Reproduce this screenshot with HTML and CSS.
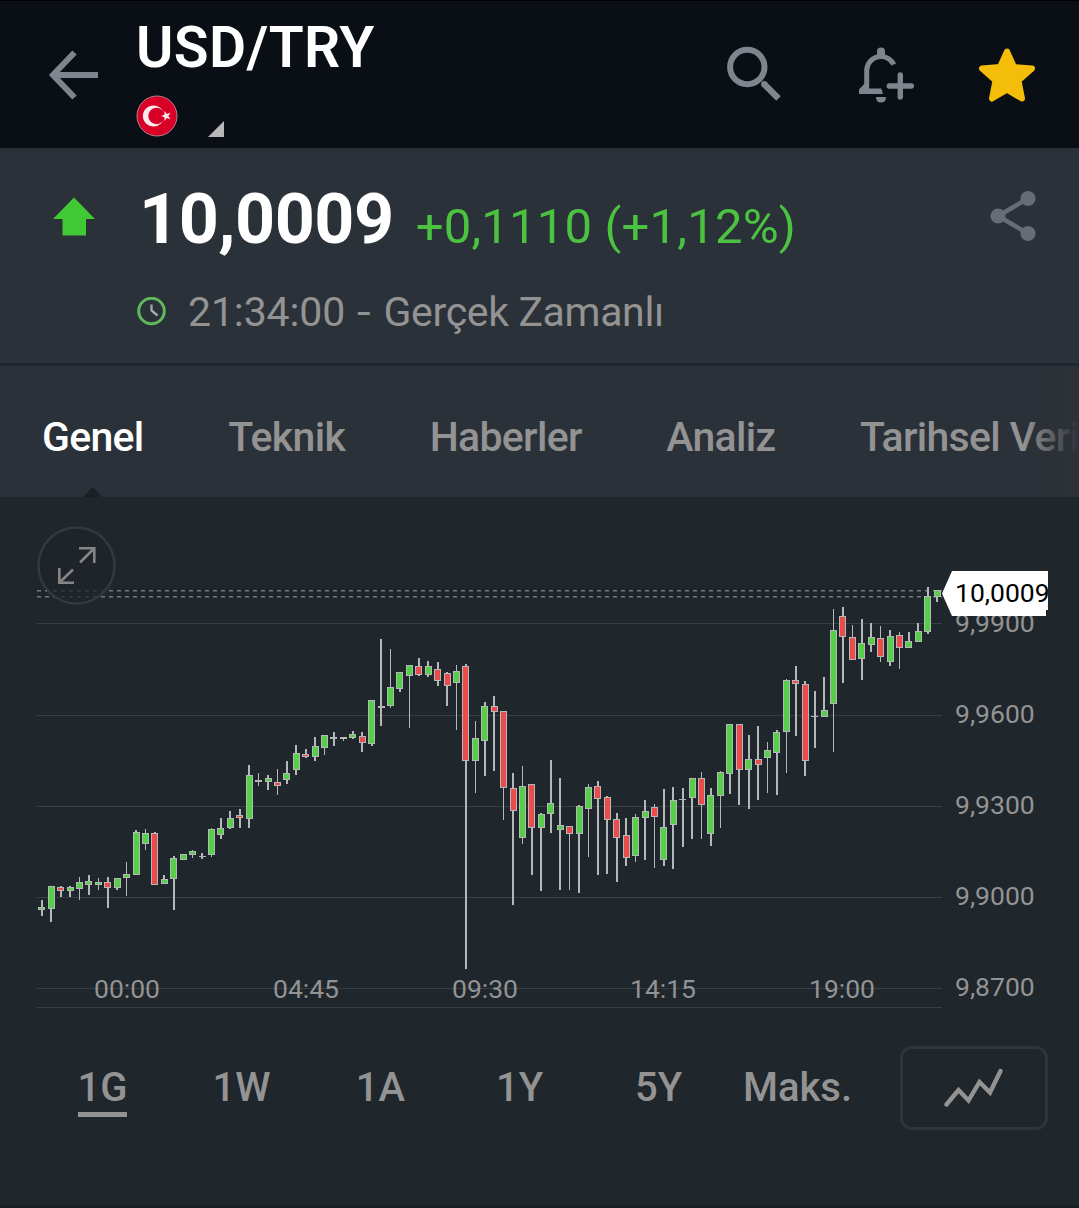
FILE: index.html
```html
<!DOCTYPE html>
<html lang="tr">

<head>
    <meta charset="UTF-8">
    <title>USD/TRY</title>
    <link rel="stylesheet" href="styles.css">
</head>

<body>

    <header class="top-bar">
        <svg class="back" width="50" height="50" viewBox="0 0 50 50">
            <path d="M26.500 2.500 L5 25 L26.500 47.500 M5 25 H50" />
        </svg>
        <div class="pair">
            <h1>USD/TRY</h1>
            <div class="pair-flag">
                <svg width="42" height="42" viewBox="0 0 42 42">
                    <circle cx="21" cy="21" r="20" fill="#d80027" stroke="#b77f8b" stroke-width="1" />
                    <circle cx="17.5" cy="21" r="10.6" fill="#fbe9ee" />
                    <circle cx="20.5" cy="21" r="8.2" fill="#d80027" />
                    <path d="M25 21 L28.5 19.8 L28.5 16 L30.8 19 L34.5 17.8 L32.3 21 L34.5 24.2 L30.8 23 L28.5 26 L28.5 22.2 Z" fill="#fbe9ee" />
                </svg>
                <span class="corner"></span>
            </div>
        </div>
        <div class="actions">
            <svg width="56" height="58" viewBox="0 0 56 58">
                <circle cx="20.300" cy="21" r="17.2" fill="none" stroke="#80858d" stroke-width="6" />
                <path d="M37 38 L51.500 52.500" stroke="#80858d" stroke-width="6.500" />
                <circle cx="37.300" cy="38.300" r="3.2" fill="#80858d" />
            </svg>
            <svg width="56" height="58" viewBox="0 0 56 58">
                <g fill="none" stroke="#80858d" stroke-width="5">
                    <path d="M7.7 41 V24 A14.3 14.3 0 0 1 34.8 18.5" />
                    <path d="M41.3 29 V51 M30.3 40 H52.3" stroke-width="5.4" stroke-linecap="round" />
                </g>
                <path d="M18 10 V5 Q18 1.5 22 1.5 Q26 1.5 26 5 V10 Z" fill="#80858d" />
                <path d="M5.2 38 L0 43.5 V48 H24 L22.3 42.500 H10 V38 Z" fill="#80858d" />
                <path d="M17 51 H27 Q27 56.5 22 56.5 Q17 56.5 17 51 Z" fill="#80858d" />
            </svg>
            <svg width="58" height="58" viewBox="0 0 58 58">
                <path d="M29 5.500 L36 21 L54 22.500 L40.500 34.500 L44 52.500 L29 43.700 L14 52.500 L17.500 34.500 L4 22.500 L22 21 Z" fill="#f4bd0a" stroke="#f4bd0a" stroke-width="6" stroke-linejoin="round" />
            </svg>
        </div>
    </header>

    <section class="quote">
        <svg class="up" width="44" height="40" viewBox="0 0 44 40">
            <path d="M22 0.500 L43 22 H34 V38.500 H10.500 V22 H1 Z" fill="#41c935" />
        </svg>
        <div class="quote-info">
            <div class="price-row">
                <span class="price">10,0009</span>
                <span class="change">+0,1110 (+1,12%)</span>
            </div>
            <div class="time-row">
                <svg width="30" height="30" viewBox="0 0 30 30">
                    <circle cx="15.500" cy="14" r="12.800" fill="none" stroke="#61b75b" stroke-width="3" />
                    <path d="M15.500 7.500 V13.500 L21.500 18.500" fill="none" stroke="#a9aaac" stroke-width="2.300" />
                </svg>
                <span class="time-text">21:34:00 <i>-</i> <b>Gerçek Zamanlı</b></span>
            </div>
        </div>
        <svg class="share" width="48" height="52" viewBox="0 0 48 52">
            <path d="M38 8.500 L8 26 L38 43.500" fill="none" stroke="#686c74" stroke-width="4.500" />
            <g fill="#686c74">
                <circle cx="38" cy="8.500" r="7.600" />
                <circle cx="8" cy="26" r="7.600" />
                <circle cx="38" cy="43.500" r="7.600" />
            </g>
        </svg>
    </section>

    <nav class="tabs">
        <a class="tab active">Genel</a>
        <a class="tab">Teknik</a>
        <a class="tab">Haberler</a>
        <a class="tab">Analiz</a>
        <a class="tab">Tarihsel Veri</a>
    </nav>

    <main>
        <svg class="chart" width="1079" height="523" viewBox="0 497 1079 523">
            <g class="grid">
                <path d="M37 623.500 H942 M37 715.500 H942 M37 806.500 H942 M37 897.500 H942 M37 988.500 H942 M37 1007.500 H942" />
            </g>
            <path class="last-line" d="M37 590.700 H942 M37 596.700 H942" />
            <g id="candles"></g>
            <g class="axis">
                <text x="955" y="632">9,9900</text>
                <text x="955" y="723">9,9600</text>
                <text x="955" y="814">9,9300</text>
                <text x="955" y="905">9,9000</text>
                <text x="955" y="996">9,8700</text>
            </g>
            <g class="axis time">
                <text x="127" y="998">00:00</text>
                <text x="306" y="998">04:45</text>
                <text x="485" y="998">09:30</text>
                <text x="663" y="998">14:15</text>
                <text x="842" y="998">19:00</text>
            </g>
            <path d="M942 593.500 L952 571 H1048 V610 H1046 V616 H952 Z" fill="#fff" />
            <text class="tag-text" x="955" y="602">10,0009</text>
            <!-- tam ekran -->
            <circle cx="76.500" cy="565.500" r="38" fill="#1f242a" fill-opacity="0.75" stroke="#34383f" stroke-width="2.500" />
            <path class="expand" d="M79 548.300 H94.300 V563 M94 548.500 L80 562.500 M59.300 568 V582.700 H74 M59.500 582.500 L73 569.500" />
        </svg>

        <div class="ranges">
            <div class="range"><span class="selected">1G</span></div>
            <div class="range"><span>1W</span></div>
            <div class="range"><span>1A</span></div>
            <div class="range"><span>1Y</span></div>
            <div class="range"><span>5Y</span></div>
            <div class="range"><span>Maks.</span></div>
            <div class="chart-type">
                <svg width="60" height="42" viewBox="0 0 60 42">
                    <path d="M2.500 37.500 L14.500 23 L24.500 33.500 L35.500 15 L46 25.500 L56.500 4" fill="none" stroke="#939393" stroke-width="4.400" stroke-linecap="round" />
                </svg>
            </div>
        </div>
    </main>

    <!-- mumları çiz -->
    <script>
        // [fitil üst, gövde üst, gövde alt, fitil alt, renk]
        var candles = [
            [900, 907, 910, 916, 'g'], [886, 886, 909, 922, 'g'], [886, 887, 891, 897, 'r'], [886, 887, 891, 897, 'g'],
            [877, 882, 889, 900, 'g'], [875, 881, 885, 895, 'g'], [878, 882, 885, 890, 'g'], [877, 882, 888, 908, 'r'],
            [878, 878, 888, 890, 'g'], [862, 874, 878, 896, 'g'], [830, 832, 875, 875, 'g'], [829, 833, 844, 850, 'g'],
            [832, 833, 885, 885, 'r'], [875, 879, 884, 884, 'g'], [856, 858, 879, 910, 'g'], [854, 854, 860, 860, 'g'],
            [850, 851, 855, 858, 'g'], [853, 856, 857, 859, 'g'], [828, 829, 855, 857, 'g'], [818, 828, 835, 839, 'g'],
            [811, 818, 828, 829, 'g'], [809, 815, 818, 828, 'r'], [765, 775, 819, 828, 'g'], [773, 780, 782, 786, 'g'],
            [775, 778, 782, 790, 'g'], [769, 782, 786, 795, 'r'], [761, 773, 780, 784, 'g'], [745, 753, 770, 775, 'g'],
            [749, 754, 757, 758, 'r'], [737, 746, 757, 761, 'g'], [735, 735, 748, 755, 'g'], [732, 737, 739, 746, 'r'],
            [737, 737, 739, 741, 'g'], [731, 734, 738, 739, 'g'], [732, 736, 743, 752, 'r'], [700, 700, 744, 746, 'g'],
            [639, 706, 708, 726, 'g'], [649, 687, 706, 708, 'g'], [672, 672, 689, 692, 'g'], [665, 665, 676, 728, 'g'],
            [658, 666, 675, 676, 'r'], [661, 666, 675, 677, 'g'], [662, 669, 681, 686, 'r'], [672, 673, 686, 706, 'r'],
            [665, 671, 683, 730, 'g'], [664, 666, 761, 969, 'r'], [721, 738, 761, 793, 'g'], [702, 706, 741, 776, 'g'],
            [696, 706, 712, 771, 'r'], [711, 711, 788, 820, 'r'], [773, 788, 811, 905, 'r'], [766, 786, 838, 844, 'g'],
            [784, 784, 828, 875, 'r'], [813, 814, 828, 891, 'g'], [760, 803, 814, 833, 'g'], [778, 825, 830, 890, 'g'],
            [826, 826, 834, 890, 'r'], [805, 806, 834, 893, 'g'], [784, 787, 809, 857, 'g'], [781, 786, 799, 875, 'r'],
            [796, 797, 820, 874, 'r'], [813, 819, 838, 882, 'r'], [818, 835, 858, 866, 'r'], [814, 817, 856, 862, 'g'],
            [800, 811, 818, 860, 'g'], [804, 807, 817, 868, 'r'], [789, 827, 860, 866, 'g'], [787, 800, 825, 869, 'g'],
            [788, 799, 800, 847, 'g'], [778, 778, 798, 839, 'g'], [772, 778, 805, 839, 'r'], [788, 795, 834, 846, 'g'],
            [771, 772, 796, 828, 'g'], [724, 724, 774, 794, 'g'], [724, 724, 770, 805, 'r'], [735, 759, 770, 809, 'g'],
            [726, 759, 765, 800, 'r'], [742, 750, 758, 793, 'g'], [730, 732, 753, 795, 'g'], [679, 680, 732, 773, 'g'],
            [666, 680, 684, 736, 'r'], [681, 684, 761, 776, 'r'], [691, 716, 717, 748, 'g'], [677, 710, 717, 717, 'g'],
            [609, 630, 704, 752, 'g'], [607, 616, 637, 683, 'r'], [625, 637, 660, 660, 'r'], [619, 643, 659, 680, 'g'],
            [623, 637, 645, 652, 'g'], [626, 638, 657, 662, 'r'], [630, 636, 662, 666, 'g'], [632, 635, 648, 669, 'r'],
            [632, 641, 648, 648, 'g'], [623, 631, 642, 642, 'g'], [587, 596, 632, 634, 'g'], [590, 590, 597, 602, 'g']
        ];

        var group = document.getElementById('candles');

        function addRect(x, y, w, h, cls) {
            var rect = document.createElementNS('http://www.w3.org/2000/svg', 'rect');
            rect.setAttribute('x', x);
            rect.setAttribute('y', y);
            rect.setAttribute('width', w);
            rect.setAttribute('height', h);
            rect.setAttribute('class', cls);
            group.appendChild(rect);
        }

        candles.forEach(function (c, i) {
            var x = 41.8 + i * 9.425;
            var left = Math.round(x - 3.5);
            addRect(x - 0.85, c[0], 1.7, c[3] - c[0], 'wick');
            addRect(left, c[1], 7, c[2] - c[1], 'wick');
            // gövde içi, 1px kenarlık kalsın
            if (c[2] - c[1] > 2) {
                addRect(left + 1, c[1] + 1, 5, c[2] - c[1] - 2, c[4] === 'g' ? 'rise' : 'fall');
            }
        });
    </script>

</body>

</html>
```

FILE: styles.css
```css
* {
    box-sizing: border-box;
}

body {
    margin: 0;
    width: 1079px;
    height: 1208px;
    overflow: hidden;
    background-color: #1f262c;
    font-family: Roboto, "Liberation Sans", sans-serif;
    color: #939393;
}

/* üst bar */
.top-bar {
    display: flex;
    height: 148px;
    padding: 0 43px 0 48px;
    background-color: #0a0f16;
    border-top: 1px solid #000;
}

.back {
    margin-top: 49px;
    fill: none;
    stroke: #80858d;
    stroke-width: 6;
}

.pair {
    flex: 1;
    margin-left: 38px;
    padding-top: 19px;
}

h1 {
    margin: 0;
    font-size: 57px;
    line-height: 56px;
    font-weight: 600;
    letter-spacing: 0.4px;
    color: #fff;
}

.pair-flag {
    display: flex;
    align-items: flex-end;
    margin-top: 19px;
}

.pair-flag svg {
    display: block;
}

.corner {
    width: 16px;
    height: 16px;
    margin-left: 30px;
    background-color: #b8b8b8;
    clip-path: polygon(100% 0, 100% 100%, 0 100%);
}

.actions {
    display: flex;
    gap: 76px;
    margin-top: 45px;
}

.actions svg:last-child {
    margin-left: -13px;
}

/* fiyat */
.quote {
    display: flex;
    height: 218px;
    padding-right: 41px;
    background-color: #2b3138;
    border-bottom: 3px solid #20262d;
}

.up {
    margin: 49px 0 0 52px;
}

.quote-info {
    flex: 1;
    margin-left: 40px;
}

.price-row {
    display: flex;
    align-items: baseline;
    height: 124px;
    padding: 30px 0 0 3px;
}

.price {
    font-size: 70px;
    font-weight: 700;
    letter-spacing: -0.5px;
    color: #fff;
}

.change {
    margin-left: 22px;
    font-size: 49px;
    letter-spacing: 0.2px;
    color: #4bc341;
}

.time-row {
    display: flex;
    align-items: center;
    gap: 22px;
    height: 78px;
    padding-top: 1px;
    font-size: 41px;
}

.time-text {
    white-space: nowrap;
    letter-spacing: -0.12px;
}

.time-text i {
    display: inline-block;
    margin: 0 4px 0 3px;
    font-style: normal;
    transform: scaleX(1.2);
}

.time-text b {
    font-weight: 400;
    letter-spacing: -0.35px;
}

.share {
    margin-top: 42px;
}

/* sekmeler */
.tabs {
    position: relative;
    display: flex;
    gap: 84.6px;
    height: 131px;
    padding: 47px 0 0 42px;
    background-color: #2b3138;
    overflow: hidden;
    white-space: nowrap;
}

.tabs::after {
    content: "";
    position: absolute;
    top: 0;
    right: 0;
    width: 55px;
    height: 100%;
    background: linear-gradient(to right, rgba(45, 49, 56, 0), #2d3138);
}

.tab {
    position: relative;
    height: 84px;
    font-size: 41px;
    line-height: 48px;
    font-weight: 500;
    letter-spacing: -0.7px;
}

.active {
    color: #fff;
}

.active::after {
    content: "";
    position: absolute;
    left: 50%;
    bottom: 0;
    width: 20px;
    height: 10px;
    margin-left: -10px;
    background-color: #1b2025;
    clip-path: polygon(50% 0, 100% 100%, 0 100%);
}

/* grafik */
.chart {
    display: block;
}

.grid path {
    stroke: #363f46;
}

.last-line {
    stroke: #777b80;
    stroke-width: 1.5;
    stroke-dasharray: 4 4;
}

#candles {
    shape-rendering: crispEdges;
}

.wick {
    fill: #b5b7b8;
}

.rise {
    fill: #56cf48;
}

.fall {
    fill: #eb4b4b;
}

.axis {
    font-size: 26.5px;
    fill: #939393;
}

.time {
    text-anchor: middle;
}

.tag-text {
    font-size: 26.5px;
    fill: #000;
}

.expand {
    fill: none;
    stroke: #858585;
    stroke-width: 2.6;
}

/* zaman aralığı */
.ranges {
    display: flex;
    align-items: flex-start;
    height: 188px;
    padding: 26px 31px 0 33px;
    border-bottom: 3px solid #191f25;
}

.range {
    width: 139px;
    padding-top: 17px;
    text-align: center;
    font-size: 40px;
    line-height: 50px;
    font-weight: 500;
}

.range span {
    display: inline-block;
    height: 54px;
}

.range .selected {
    border-bottom: 5px solid #939393;
}

.chart-type {
    display: flex;
    align-items: center;
    justify-content: center;
    width: 148px;
    height: 84px;
    margin-left: auto;
    border: 3px solid #30343c;
    border-radius: 12px;
}
```
